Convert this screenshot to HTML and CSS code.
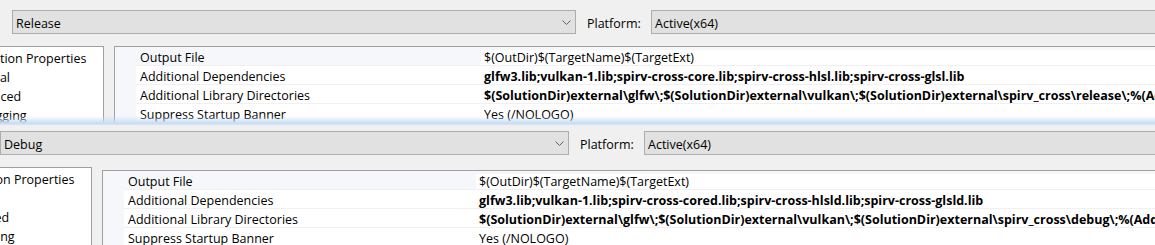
FILE: index.html
```html
<!DOCTYPE html>
<html lang="en">
<head>
  <meta charset="UTF-8" />
  <title>Linker Property Pages</title>
  <link rel="stylesheet" href="styles.css">
</head>
<body>

  <div class="shot release">
    <div class="toolbar">
      <div class="combo config">
        <span>Release</span>
        <svg class="chevron" width="9" height="5" viewBox="0 0 9 5"><polyline points="0.5,0.5 4.5,4.5 8.5,0.5" /></svg>
      </div>
      <span class="label">Platform:</span>
      <div class="combo platform"><span>Active(x64)</span></div>
    </div>
    <div class="body">
      <ul class="tree">
        <li class="root">Configuration Properties</li>
        <li>General</li>
        <li>Advanced</li>
        <li>Debugging</li>
      </ul>
      <div class="grid">
        <div class="row current"><span class="name">Output File</span><span class="value">$(OutDir)$(TargetName)$(TargetExt)</span></div>
        <div class="row"><span class="name">Additional Dependencies</span><span class="value bold">glfw3.lib;vulkan-1.lib;spirv-cross-core.lib;spirv-cross-hlsl.lib;spirv-cross-glsl.lib</span></div>
        <div class="row"><span class="name">Additional Library Directories</span><span class="value bold">$(SolutionDir)external\glfw\;$(SolutionDir)external\vulkan\;$(SolutionDir)external\spirv_cross\release\;%(AdditionalLibraryDirectories)</span></div>
        <div class="row"><span class="name">Suppress Startup Banner</span><span class="value">Yes (/NOLOGO)</span></div>
      </div>
    </div>
  </div>

  <div class="shot debug">
    <div class="toolbar">
      <div class="combo config">
        <span>Debug</span>
        <svg class="chevron" width="9" height="5" viewBox="0 0 9 5"><polyline points="0.5,0.5 4.5,4.5 8.5,0.5" /></svg>
      </div>
      <span class="label">Platform:</span>
      <div class="combo platform"><span>Active(x64)</span></div>
    </div>
    <div class="body">
      <ul class="tree">
        <li class="root">Configuration Properties</li>
        <li>General</li>
        <li>Advanced</li>
        <li>Debugging</li>
      </ul>
      <div class="grid">
        <div class="row current"><span class="name">Output File</span><span class="value">$(OutDir)$(TargetName)$(TargetExt)</span></div>
        <div class="row"><span class="name">Additional Dependencies</span><span class="value bold">glfw3.lib;vulkan-1.lib;spirv-cross-cored.lib;spirv-cross-hlsld.lib;spirv-cross-glsld.lib</span></div>
        <div class="row"><span class="name">Additional Library Directories</span><span class="value bold">$(SolutionDir)external\glfw\;$(SolutionDir)external\vulkan\;$(SolutionDir)external\spirv_cross\debug\;%(AdditionalLibraryDirectories)</span></div>
        <div class="row"><span class="name">Suppress Startup Banner</span><span class="value">Yes (/NOLOGO)</span></div>
      </div>
    </div>
  </div>

</body>
</html>
```

FILE: styles.css
```css
* {
  box-sizing: border-box;
}
body {
  margin: 0;
  padding: 0;
  width: 1155px;
  height: 245px;
  overflow: hidden;
  background: #f0f0f0;
  font-family: 'Open Sans', 'Noto Sans', sans-serif;
  font-size: 12.5px;
  color: #000;
}

/* each screenshot strip */
.shot {
  position: relative;
  overflow: hidden;
  background: #f0f0f0;
}
.shot.release {
  height: 125px;
  padding-top: 10px;
  --combo-left: 12px;
  --combo-w: 564px;
  --tree-right: 104px;
  --name-w: 345px;
  --grid-drop: 0px;
}
.shot.release::after {
  content: '';
  position: absolute;
  left: 0;
  right: 0;
  bottom: 0;
  height: 9px;
  background: linear-gradient(rgba(214, 232, 250, 0), #c9def4 80%, #d6e6f6);
}
.shot.debug {
  height: 120px;
  padding-top: 6px;
  --combo-left: 0px;
  --combo-w: 569px;
  --tree-right: 92px;
  --name-w: 352px;
  --grid-drop: 3px;
}

.toolbar {
  display: flex;
  align-items: center;
  height: 24px;
  padding-left: var(--combo-left);
}
.combo {
  display: flex;
  align-items: center;
  flex-shrink: 0;
  height: 24px;
  padding: 2px 3px 0;
  background: #e1e1e1;
  border: 1px solid #adadad;
  white-space: nowrap;
}
.combo.config {
  width: var(--combo-w);
  justify-content: space-between;
}
.combo.platform {
  width: 700px;
}
.chevron {
  fill: none;
  stroke: #606060;
  stroke-width: 1;
  margin: -2px 1px 0 0;
}
.label {
  width: 75px;
  padding: 2px 0 0 11px;
  flex-shrink: 0;
}

.body {
  display: flex;
  align-items: flex-start;
  gap: 10px;
  margin-top: 12px;
}
.tree {
  list-style: none;
  margin: 0 0 0 calc(var(--tree-right) - 180px);
  padding: 0;
  width: 180px;
  height: 120px;
  flex-shrink: 0;
  background: #fff;
  border: 1px solid #a0a0a0;
  white-space: nowrap;
}
.tree li {
  height: 19px;
  padding: 4px 0 0 39px;
  line-height: 15px;
}
.tree li.root {
  padding-left: 18px;
}

.grid {
  flex: 1;
  min-width: 1100px;
  height: 120px;
  margin-top: var(--grid-drop);
  border: 1px solid #a0a0a0;
  padding-left: 21px;
  background: linear-gradient(90deg, #f5f7fb 21px, #fff 21px);
}
.row {
  display: flex;
  height: 19px;
  padding-top: 3px;
  line-height: 15px;
  border-bottom: 1px solid #f0f0f0;
  background: #fff;
  white-space: nowrap;
}
.row .name {
  width: var(--name-w);
  flex-shrink: 0;
  padding-left: 4px;
}
.row.current,
.row.current .name {
  background: #f5f7fb;
}
.row.current .value {
  background: #fff;
  flex: 1;
}
.row .value {
  padding-left: 3px;
}
.value.bold {
  font-weight: bold;
}
```
